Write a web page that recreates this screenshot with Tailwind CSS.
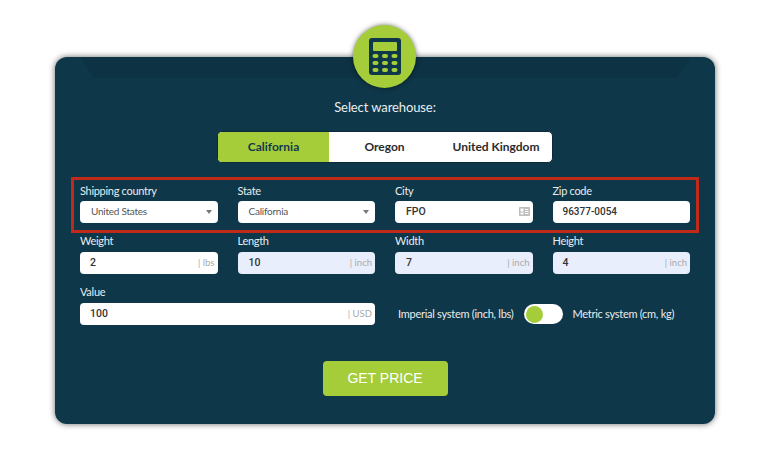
<!DOCTYPE html>
<html lang="en">
<head>
  <meta charset="UTF-8"/>
  <title>Shipping calculator</title>
  <script src="https://cdn.jsdelivr.net/npm/@tailwindcss/browser@4"></script>
</head>
<body class="bg-white h-[468px] w-[768px] overflow-hidden font-['Lato',sans-serif]">
  <div class="pt-[57px] pl-[55px]">
    <!-- card -->
    <div class="relative w-[660px] h-[367px] bg-[#0e3749] rounded-[12px] shadow-[0_0_6px_rgba(0,0,0,0.6)]">
      <!-- darker band under the icon -->
      <svg class="absolute left-0 top-0" width="660" height="22" viewBox="0 0 660 22"><polygon points="26,0 635,0 622,21 39,21" fill="#0c3243"/></svg>
      <!-- calculator badge -->
      <div class="absolute left-[298px] top-[-32px] w-[63px] h-[63px] rounded-full bg-[#a4cd39] shadow-[0_0_5px_rgba(0,0,0,0.55)] flex items-center justify-center">
        <svg width="32" height="37" viewBox="0 0 32 37">
          <rect width="32" height="37" rx="3" fill="#0e3749"/>
          <rect x="4" y="4" width="24" height="9" rx="1" fill="#a4cd39"/>
          <g fill="#a4cd39">
            <rect x="3.5" y="16" width="6" height="4" rx="2"/><rect x="13" y="16" width="6" height="4" rx="2"/><rect x="22.5" y="16" width="6" height="4" rx="2"/>
            <rect x="3.5" y="23" width="6" height="4" rx="2"/><rect x="13" y="23" width="6" height="4" rx="2"/><rect x="22.5" y="23" width="6" height="4" rx="2"/>
            <rect x="3.5" y="30" width="6" height="4" rx="2"/><rect x="13" y="30" width="6" height="4" rx="2"/><rect x="22.5" y="30" width="6" height="4" rx="2"/>
          </g>
        </svg>
      </div>

      <div class="pt-[42px] flex flex-col items-center">
        <p class="text-[13px] tracking-[-0.1px] leading-[16px] text-[#e8edef]">Select warehouse:</p>
        <!-- warehouse tabs -->
        <div class="mt-[16px] flex w-[334px] h-[30px] rounded-[5px] overflow-hidden bg-white border border-[#0a2a38] text-[12px] font-bold box-content -my-px">
          <div class="w-[111px] bg-[#a4cd39] text-[#16384f] flex items-center justify-center">California</div>
          <div class="w-[111px] text-[#2b2b2b] flex items-center justify-center">Oregon</div>
          <div class="w-[112px] text-[#2b2b2b] flex items-center justify-center">United Kingdom</div>
        </div>
      </div>

      <!-- highlighted address row -->
      <div class="mt-[15px] mx-[16px] h-[56px] border-[3px] border-[#c02a18] px-[6px] pt-[3.5px] grid grid-cols-4 gap-x-[20px] text-[11px] tracking-[-0.3px] text-[#e8edef]">
        <div>
          <p class="leading-[14px] mb-[3px]">Shipping country</p>
          <div class="h-[22px] bg-white rounded-[4px] flex items-center justify-between pl-[11px] pr-[6px] text-[10px] tracking-[-0.25px] text-[#555]">United States<span class="w-0 h-0 border-x-[3px] border-x-transparent border-t-[4px] border-t-[#777]"></span></div>
        </div>
        <div>
          <p class="leading-[14px] mb-[3px]">State</p>
          <div class="h-[22px] bg-white rounded-[4px] flex items-center justify-between pl-[11px] pr-[6px] text-[10px] tracking-[-0.25px] text-[#555]">California<span class="w-0 h-0 border-x-[3px] border-x-transparent border-t-[4px] border-t-[#777]"></span></div>
        </div>
        <div>
          <p class="leading-[14px] mb-[3px]">City</p>
          <div class="h-[22px] bg-white rounded-[4px] flex items-center justify-between pl-[11px] pr-[3px] text-[10.5px] font-medium tracking-normal text-[#333] font-['Roboto',sans-serif]">FPO
            <svg width="11" height="9" viewBox="0 0 11 9"><rect width="11" height="9" rx="1" fill="#bdbdbd"/><rect x="1.5" y="1.5" width="3" height="3" fill="#fff"/><rect x="1.5" y="5.5" width="3" height="2" fill="#fff"/><rect x="6" y="2" width="3.5" height="1" fill="#fff"/><rect x="6" y="4" width="3.5" height="1" fill="#fff"/><rect x="6" y="6" width="3.5" height="1" fill="#fff"/></svg>
          </div>
        </div>
        <div>
          <p class="leading-[14px] mb-[3px]">Zip code</p>
          <div class="h-[22px] bg-white rounded-[4px] flex items-center pl-[10px] text-[10px] font-medium tracking-normal text-[#333] font-['Roboto',sans-serif]">96377-0054</div>
        </div>
      </div>

      <!-- dimensions -->
      <div class="mt-[1px] mx-[25px] grid grid-cols-4 gap-x-[20px] text-[11px] tracking-[-0.3px] text-[#e8edef]">
        <div>
          <p class="leading-[14px] mb-[4px]">Weight</p>
          <div class="h-[22px] bg-white rounded-[4px] flex items-center justify-between pl-[10px] pr-[3px] text-[10.5px] font-medium tracking-normal text-[#333] font-['Roboto',sans-serif]">2<span class="text-[9.5px] font-normal text-[#aaa] font-['Lato',sans-serif]">| lbs</span></div>
        </div>
        <div>
          <p class="leading-[14px] mb-[4px]">Length</p>
          <div class="h-[22px] bg-[#e8eefb] rounded-[4px] flex items-center justify-between pl-[11px] pr-[3px] text-[10.5px] font-medium tracking-normal text-[#333] font-['Roboto',sans-serif]">10<span class="text-[9.5px] font-normal text-[#aaa] font-['Lato',sans-serif]">| inch</span></div>
        </div>
        <div>
          <p class="leading-[14px] mb-[4px]">Width</p>
          <div class="h-[22px] bg-[#e8eefb] rounded-[4px] flex items-center justify-between pl-[11px] pr-[3px] text-[10.5px] font-medium tracking-normal text-[#333] font-['Roboto',sans-serif]">7<span class="text-[9.5px] font-normal text-[#aaa] font-['Lato',sans-serif]">| inch</span></div>
        </div>
        <div>
          <p class="leading-[14px] mb-[4px]">Height</p>
          <div class="h-[22px] bg-[#e8eefb] rounded-[4px] flex items-center justify-between pl-[10px] pr-[3px] text-[10.5px] font-medium tracking-normal text-[#333] font-['Roboto',sans-serif]">4<span class="text-[9.5px] font-normal text-[#aaa] font-['Lato',sans-serif]">| inch</span></div>
        </div>
      </div>

      <!-- value and unit switch -->
      <div class="mt-[11px] mx-[25px] flex items-end text-[11px] tracking-[-0.27px] text-[#e8edef]">
        <div class="w-[295px]">
          <p class="leading-[14px] mb-[4px] pt-px -mt-px">Value</p>
          <div class="h-[22px] bg-white rounded-[4px] flex items-center justify-between pl-[10px] pr-[3px] text-[10.5px] font-medium tracking-normal text-[#333] font-['Roboto',sans-serif]">100<span class="text-[9.5px] font-normal text-[#aaa] font-['Lato',sans-serif]">| USD</span></div>
        </div>
        <div class="ml-[23px] h-[22px] flex items-center">
          <span>Imperial system (inch, lbs)</span>
          <span class="ml-[11px] mr-[9px] w-[39px] h-[20px] bg-white rounded-full flex items-center pl-[2px]"><span class="w-[17px] h-[17px] rounded-full bg-[#a4cd39]"></span></span>
          <span>Metric system (cm, kg)</span>
        </div>
      </div>

      <div class="mt-[36px] flex justify-center">
        <div class="w-[125px] h-[35px] bg-[#a4cd39] rounded-[4px] flex items-center justify-center text-[14px] text-white font-['Liberation_Sans',sans-serif]">GET PRICE</div>
      </div>
    </div>
  </div>
</body>
</html>
